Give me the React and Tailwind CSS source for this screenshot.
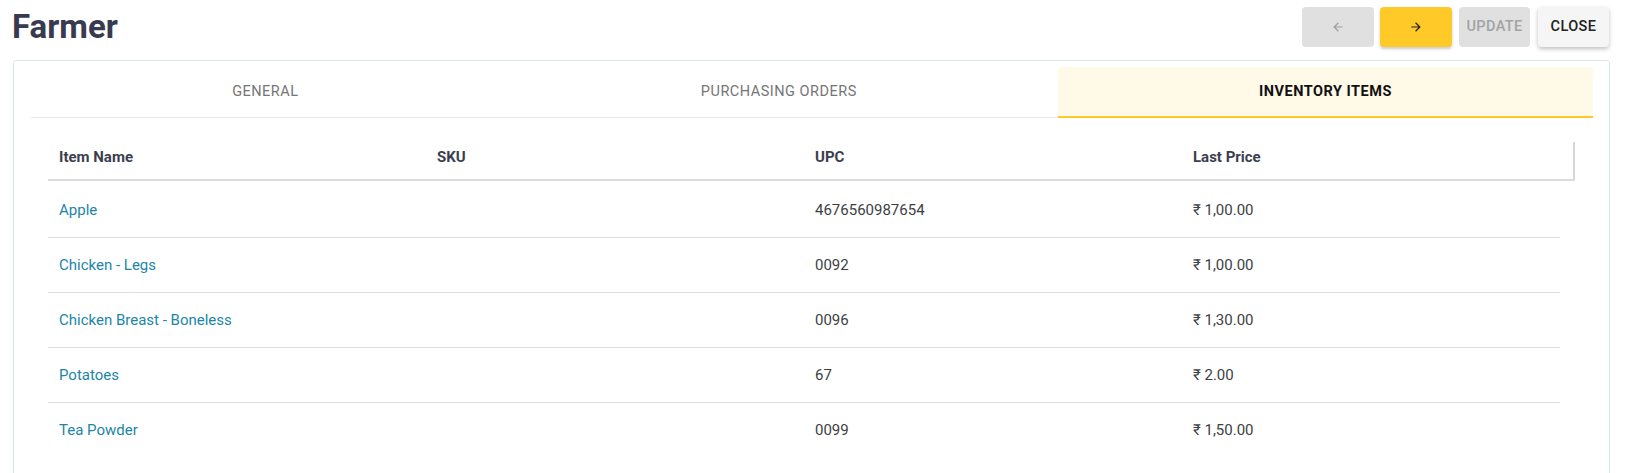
import React, { useState } from 'react';

const TABS = ['General', 'Purchasing Orders', 'Inventory Items'];

const COLUMNS = ['Item Name', 'SKU', 'UPC', 'Last Price'];

const ROWS = [
  { name: 'Apple', sku: '', upc: '4676560987654', price: '₹ 1,00.00' },
  { name: 'Chicken - Legs', sku: '', upc: '0092', price: '₹ 1,00.00' },
  { name: 'Chicken Breast - Boneless', sku: '', upc: '0096', price: '₹ 1,30.00' },
  { name: 'Potatoes', sku: '', upc: '67', price: '₹ 2.00' },
  { name: 'Tea Powder', sku: '', upc: '0099', price: '₹ 1,50.00' },
];

const ArrowBack = ({ className }) => (
  <svg viewBox="0 0 24 24" width="14" height="14" className={className} fill="currentColor">
    <path d="M20 11H7.83l5.59-5.59L12 4l-8 8 8 8 1.41-1.41L7.83 13H20v-2z" />
  </svg>
);

const ArrowForward = ({ className }) => (
  <svg viewBox="0 0 24 24" width="14" height="14" className={className} fill="currentColor">
    <path d="M12 4l-1.41 1.41L16.17 11H4v2h12.17l-5.58 5.59L12 20l8-8z" />
  </svg>
);

const App = () => {
  const [tab, setTab] = useState(2);

  return (
    <div
      className="min-h-[473px] bg-white pl-[13px] pr-[19px]"
      style={{ fontFamily: 'Roboto, "Liberation Sans", sans-serif' }}
    >
      {/* page header */}
      <div className="flex items-start justify-between pt-[7px]">
        <h1 className="text-[33px] leading-[40px] font-bold text-[#383b4f] -ml-px">Farmer</h1>
        <div className="flex mr-[1px]">
          <button
            type="button"
            disabled
            className="w-[72px] h-[40px] rounded bg-[#e0e0e0] flex items-center justify-center text-[#9e9e9e]"
          >
            <ArrowBack />
          </button>
          <button
            type="button"
            className="ml-[6px] w-[72px] h-[40px] rounded bg-[#ffca28] flex items-center justify-center text-[#212121] shadow-[0_2px_3px_rgba(0,0,0,0.2)]"
          >
            <ArrowForward />
          </button>
          <button
            type="button"
            disabled
            className="ml-[7px] w-[71px] h-[40px] rounded bg-[#e0e0e0] text-[14.5px] font-medium tracking-[0.4px] text-[#a3a3a3] uppercase"
          >
            Update
          </button>
          <button
            type="button"
            className="ml-[8px] w-[71px] h-[40px] rounded bg-[#f5f5f5] text-[14.5px] font-medium tracking-[0.4px] text-[#212121] uppercase shadow-[0_2px_4px_rgba(0,0,0,0.25)]"
          >
            Close
          </button>
        </div>
      </div>

      {/* card */}
      <div className="mt-[13px] border border-[#dde6e6] rounded-[3px] pl-[17px] pr-[16px] pt-[6px] min-h-[420px]">
        <div className="flex border-b border-[#e3e9e9]">
          {TABS.map((label, i) => {
            const active = i === tab;
            return (
              <button
                key={label}
                type="button"
                onClick={() => setTab(i)}
                className={`grow h-[51px] -mb-px px-4 text-[14.5px] uppercase tracking-[0.5px] ${
                  active
                    ? 'bg-[#fff9e8] border-b-2 border-[#ffca28] text-[#111111] font-bold'
                    : 'text-[#757575] font-normal border-b-2 border-transparent'
                }`}
              >
                {label}
              </button>
            );
          })}
        </div>

        <div className="pl-[17px] pt-[18px]">
          {/* header */}
          <div className="flex w-[1527px] h-[45px] border-b-2 border-[#dcdcdc]">
            {COLUMNS.map((c) => (
              <div
                key={c}
                className="w-[378px] pl-[11px] flex items-center text-[15px] font-bold text-[#3b3e50]"
              >
                {c}
              </div>
            ))}
            <div className="w-[15px] mt-[6px] border-r-2 border-[#d6d6d6]" />
          </div>

          {/* body */}
          <div className="w-[1512px] pt-[2px]">
            {ROWS.map((r, i) => (
              <div
                key={r.name}
                className={`flex h-[55px] items-center text-[15px] text-[#3c3f44] ${
                  i < ROWS.length - 1 ? 'border-b border-[#dedede]' : ''
                }`}
              >
                <div className="w-[378px] pl-[11px]">
                  <a href="#" className="text-[#1b86a7]">
                    {r.name}
                  </a>
                </div>
                <div className="w-[378px] pl-[11px]">{r.sku}</div>
                <div className="w-[378px] pl-[11px]">{r.upc}</div>
                <div className="w-[378px] pl-[11px]">{r.price}</div>
              </div>
            ))}
          </div>
        </div>
      </div>
    </div>
  );
};

export default App;
